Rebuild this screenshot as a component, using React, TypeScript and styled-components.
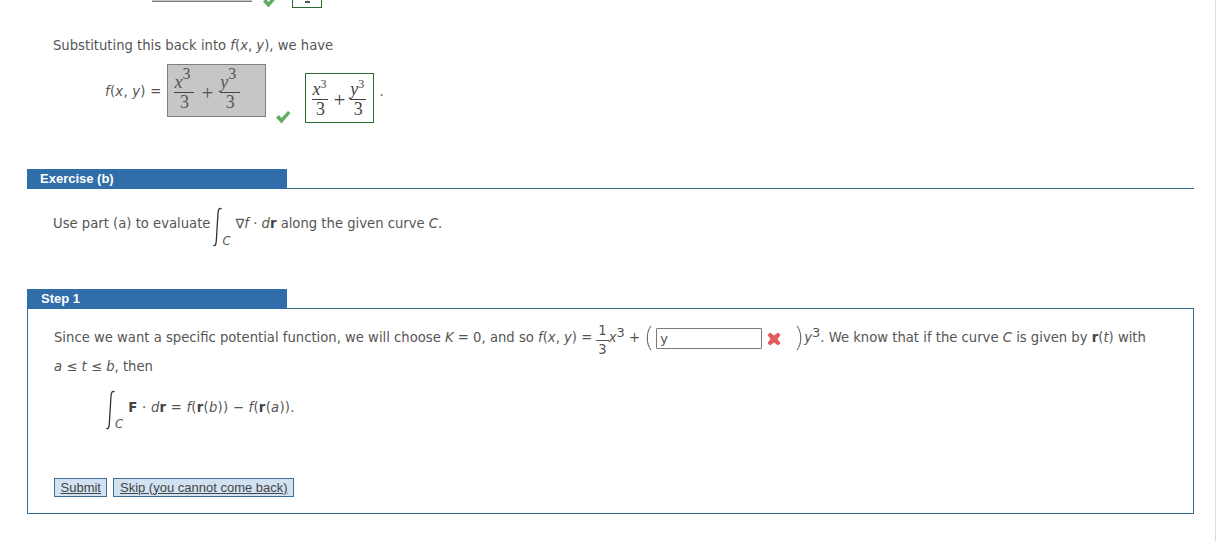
import React from "react";
import styled, { createGlobalStyle } from "styled-components";

const GlobalStyle = createGlobalStyle`
  html, body {
    margin: 0;
    padding: 0;
    background: #fff;
    overflow: hidden;
  }
`;

const Page = styled.div`
  box-sizing: border-box;
  width: 1216px;
  height: 541px;
  padding: 0 21px 0 27px;
  border-right: 1px solid #dcdcdc;
  font-family: "DejaVu Sans", Verdana, sans-serif;
  font-size: 13.2px;
  color: #555;
  overflow: hidden;
`;

const StubRow = styled.div`
  display: flex;
  align-items: flex-start;
  height: 8px;
  padding-left: 125px;
  overflow: hidden;
`;

const GrayStub = styled.div`
  box-sizing: border-box;
  width: 100px;
  height: 2px;
  background: #c6c6c6;
  border-bottom: 1px solid #808080;
`;

const GreenStub = styled.div`
  box-sizing: border-box;
  width: 30px;
  height: 8px;
  margin-left: 14px;
  border: 1px solid #2c6b2f;
  border-top: 0;
  display: flex;
  justify-content: center;

  &::after {
    content: "";
    width: 5px;
    height: 2px;
    margin-top: 1px;
    background: #555;
  }
`;

const Para = styled.div<{ $top: number; $left: number }>`
  margin-top: ${(p) => p.$top}px;
  margin-left: ${(p) => p.$left}px;
  display: flex;
  align-items: center;
  white-space: pre;
  line-height: 16px;
`;

const I = styled.i`
  font-style: italic;
`;

const B = styled.b`
  font-weight: 700;
  color: #444;
`;

const MathRow = styled.div<{ $top: number; $left: number; $height: number }>`
  margin-top: ${(p) => p.$top}px;
  margin-left: ${(p) => p.$left}px;
  height: ${(p) => p.$height}px;
  display: flex;
  align-items: center;
  white-space: pre;
  letter-spacing: 0.25px;
`;

const AnswerBox = styled.div`
  box-sizing: border-box;
  width: 99px;
  height: 53px;
  margin: 0 0 2px 6px;
  padding: 3px 0 0 6px;
  background: #c6c6c6;
  border: 1px solid #808080;
  display: flex;
  align-items: flex-start;
  gap: 7px;
  font-family: "Liberation Serif", serif;
  color: #555;
  letter-spacing: 0;
`;

const KeyBox = styled.div`
  box-sizing: border-box;
  width: 69px;
  height: 50px;
  margin: 14px 0 0 14px;
  padding-left: 6px;
  border: 1px solid #2c6b2f;
  display: flex;
  align-items: flex-start;
  gap: 5px;
  font-family: "Liberation Serif", serif;
  color: #444;
  letter-spacing: 0;
`;

const Period = styled.span`
  margin-left: 5px;
`;

const SerifFrac = styled.span<{ $size: number; $sup: number; $num: number; $rise: number; $rule: number; $lift: number }>`
  display: inline-flex;
  flex-direction: column;
  align-items: center;
  font-size: ${(p) => p.$size}px;
  line-height: ${(p) => p.$size + 1}px;

  & > span:first-child {
    box-sizing: border-box;
    width: ${(p) => p.$rule}px;
    height: ${(p) => p.$num}px;
    padding-top: ${(p) => p.$num - p.$size - 1 - p.$lift}px;
    white-space: nowrap;
    text-align: left;
    border-bottom: 1px solid #444;
  }

  sup {
    font-size: ${(p) => p.$sup}px;
    line-height: 0;
    vertical-align: ${(p) => p.$rise}px;
  }
`;

const Plus = styled.span<{ $top: number }>`
  margin-top: ${(p) => p.$top}px;
  font-family: "Liberation Serif", serif;
  font-size: 21px;
  line-height: 23px;
`;

const CheckMark = styled.svg<{ $top: number; $left: number }>`
  flex: none;
  width: 16px;
  height: 14px;
  margin-top: ${(p) => p.$top}px;
  margin-left: ${(p) => p.$left}px;
`;

const BarHeader = styled.div<{ $top: number; $indent: number }>`
  margin-top: ${(p) => p.$top}px;
  height: 20px;
  border-bottom: 1px solid #336b8c;
  box-sizing: border-box;

  span {
    box-sizing: border-box;
    display: block;
    width: 260px;
    height: 20px;
    padding-left: ${(p) => p.$indent}px;
    background: #2f6ea9;
    color: #fff;
    font: 700 13px/19px "Liberation Sans", Arial, sans-serif;
  }
`;

const StepBox = styled.div`
  box-sizing: border-box;
  height: 205px;
  padding: 12px 26px 0;
  border: 1px solid #336b8c;
  border-top: 0;
`;

const Integral = styled.span`
  display: inline-flex;
  align-items: flex-end;
  height: 40px;
  margin: 6px 5px 0 3px;
`;

const IntegralSign = styled.svg`
  width: 9px;
  height: 40px;
  flex: none;
`;

const Sub = styled.i`
  font-size: 11.5px;
  line-height: 12px;
`;

const SmallFrac = styled.span`
  display: inline-flex;
  flex-direction: column;
  align-items: center;
  margin: 4px 0 -4px 4px;

  & > span:first-child {
    height: 15px;
    line-height: 11px;
    padding: 0 2px;
    border-bottom: 1px solid #555;
  }

  & > span:last-child {
    line-height: 18px;
  }
`;

const Powered = styled.span`
  sup {
    font-size: 13px;
    line-height: 0;
  }
`;

const BigParen = styled.svg`
  flex: none;
  width: 9px;
  height: 26px;
`;

const ClosingParen = styled(BigParen)`
  margin-left: -1px;
`;

const AnswerInput = styled.input`
  box-sizing: border-box;
  width: 106px;
  height: 21px;
  margin-left: 3px;
  padding: 0 3px;
  border: 1px solid #7a7a7a;
  border-radius: 1px;
  background: #fff;
  font: 13px "DejaVu Sans", Verdana, sans-serif;
  color: #555;
  outline: none;
`;

const CrossMark = styled.svg`
  flex: none;
  width: 14px;
  height: 14px;
  margin: 2px 15px 0 5px;
`;

const Buttons = styled.div`
  display: flex;
  gap: 6px;
  margin-top: 49px;
`;

const FlatButton = styled.button`
  box-sizing: border-box;
  height: 19px;
  padding: 0 5.5px;
  background: #d2e2f2;
  border: 1px solid #3c6e96;
  border-radius: 0;
  font: 13px/16px "Liberation Sans", Arial, sans-serif;
  color: #444;
  text-decoration: underline;
`;

const Check = ({ top, left }: { top: number; left: number }) => (
  <CheckMark $top={top} $left={left} viewBox="0 0 16 14">
    <path d="M1 7.5 L4 5 L6.5 8 L13 1 L15.5 3 L6.5 13.5 Z" fill="#62ad62" />
  </CheckMark>
);

const IntegralGlyph = () => (
  <IntegralSign viewBox="0 0 9 40">
    <path
      d="M0.5 38 C1.5 39.5 3 38.5 3.3 34 L5 6 C5.3 1.5 7 0.5 8.5 2"
      fill="none"
      stroke="#333"
      strokeWidth="1.3"
    />
  </IntegralSign>
);

const BigFrac = ({ base }: { base: string }) => (
  <SerifFrac $size={18} $sup={16} $num={25} $rise={9} $rule={20} $lift={1}>
    <span>
      <I>{base}</I>
      <sup>3</sup>
    </span>
    <span>3</span>
  </SerifFrac>
);

const KeyFrac = ({ base }: { base: string }) => (
  <SerifFrac $size={18} $sup={12} $num={26} $rise={7} $rule={16} $lift={1}>
    <span>
      <I>{base}</I>
      <sup>3</sup>
    </span>
    <span>3</span>
  </SerifFrac>
);

const App = () => {
  return (
    <Page>
      <GlobalStyle />
      <StubRow>
        <GrayStub />
        <Check top={-6} left={10} />
        <GreenStub />
      </StubRow>

      <Para $top={30} $left={26}>
        Substituting this back into <I>f</I>(<I>x</I>, <I>y</I>), we have
      </Para>

      <MathRow $top={7} $left={78} $height={60}>
        <span>
          <I>f</I>(<I>x</I>, <I>y</I>) =
        </span>
        <AnswerBox>
          <BigFrac base="x" />
          <Plus $top={14}>+</Plus>
          <BigFrac base="y" />
        </AnswerBox>
        <Check top={52} left={9} />
        <KeyBox>
          <KeyFrac base="x" />
          <Plus $top={15}>+</Plus>
          <KeyFrac base="y" />
        </KeyBox>
        <Period>.</Period>
      </MathRow>

      <BarHeader $top={48} $indent={13}>
        <span>Exercise (b)</span>
      </BarHeader>

      <Para $top={12} $left={26}>
        Use part (a) to evaluate
        <Integral>
          <IntegralGlyph />
          <Sub>C</Sub>
        </Integral>
        ∇<I>f</I> · <I>d</I>
        <B>r</B> along the given curve <I>C</I>.
      </Para>

      <BarHeader $top={42} $indent={14}>
        <span>Step 1</span>
      </BarHeader>

      <StepBox>
        <Para $top={0} $left={0}>
          Since we want a specific potential function, we will choose <I>K</I> = 0, and so <I>f</I>(<I>x</I>, <I>y</I>) =
          <SmallFrac>
            <span>1</span>
            <span>3</span>
          </SmallFrac>
          <Powered>
            <I>x</I>
            <sup>3</sup> +{" "}
          </Powered>
          <BigParen viewBox="0 0 9 26">
            <path d="M7 1 C2 7 2 19 7 25" fill="none" stroke="#555" strokeWidth="1" />
          </BigParen>
          <AnswerInput defaultValue="y" />
          <CrossMark viewBox="0 0 14 14">
            <path d="M0.5 3 L3 0.5 L7 3.5 L11 0.5 L13.5 3 L10.5 7 L13.5 11 L11 13.5 L7 10.5 L3 13.5 L0.5 11 L3.5 7 Z" fill="#e05c5c" />
          </CrossMark>
          <ClosingParen viewBox="0 0 9 26">
            <path d="M2 1 C7 7 7 19 2 25" fill="none" stroke="#555" strokeWidth="1" />
          </ClosingParen>
          <Powered>
            <I>y</I>
            <sup>3</sup>. We know that if the curve <I>C</I> is given by <B>r</B>(<I>t</I>) with
          </Powered>
        </Para>
        <Para $top={4} $left={0}>
          <I>a</I> ≤ <I>t</I> ≤ <I>b</I>, then
        </Para>
        <MathRow $top={10} $left={49} $height={44}>
          <Integral>
            <IntegralGlyph />
            <Sub>C</Sub>
          </Integral>
          <B>F</B> · <I>d</I>
          <B>r</B> = <I>f</I>(<B>r</B>(<I>b</I>)) − <I>f</I>(<B>r</B>(<I>a</I>)).
        </MathRow>
        <Buttons>
          <FlatButton>Submit</FlatButton>
          <FlatButton>Skip (you cannot come back)</FlatButton>
        </Buttons>
      </StepBox>
    </Page>
  );
};

export default App;
